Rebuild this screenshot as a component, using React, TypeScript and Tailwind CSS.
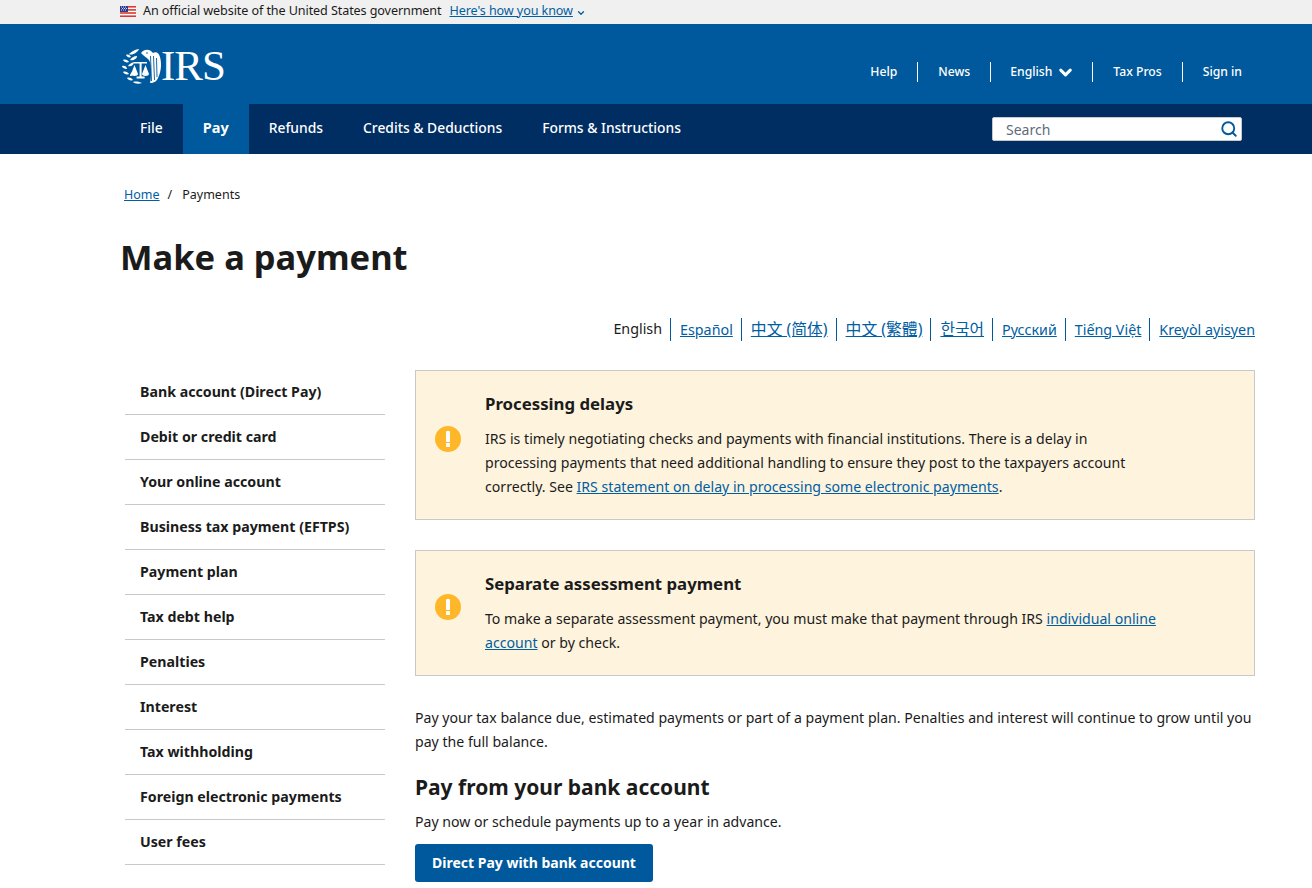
import { ChevronDown, Search } from 'lucide-react'

const sideLinks = [
  'Bank account (Direct Pay)',
  'Debit or credit card',
  'Your online account',
  'Business tax payment (EFTPS)',
  'Payment plan',
  'Tax debt help',
  'Penalties',
  'Interest',
  'Tax withholding',
  'Foreign electronic payments',
  'User fees',
]

const languages = [
  { label: 'Español', cjk: false },
  { label: '中文 (简体)', cjk: true },
  { label: '中文 (繁體)', cjk: true },
  { label: '한국어', cjk: true },
  { label: 'Русский', cjk: false },
  { label: 'Tiếng Việt', cjk: false },
  { label: 'Kreyòl ayisyen', cjk: false },
]

const navItems = ['File', 'Pay', 'Refunds', 'Credits & Deductions', 'Forms & Instructions']

function Flag() {
  return (
    <svg width="16" height="11" viewBox="0 0 16 11" className="shrink-0">
      <rect width="16" height="11" fill="#fff" />
      <rect y="0" width="16" height="1.6" fill="#d83933" />
      <rect y="3.1" width="16" height="1.6" fill="#d83933" />
      <rect y="6.2" width="16" height="1.6" fill="#d83933" />
      <rect y="9.4" width="16" height="1.6" fill="#d83933" />
      <rect width="8" height="6" fill="#2e3a8c" />
      <path d="M1 1h1M3 1h1M5 1h1M2 2.5h1M4 2.5h1M6 2.5h1M1 4h1M3 4h1M5 4h1" stroke="#fff" strokeWidth="0.8" />
    </svg>
  )
}

function Seal() {
  return (
    <svg width="40" height="35" viewBox="0 0 40 35" className="shrink-0" fill="#fff">
      {/* laurel */}
      <path d="M4 6c2-1 4 0 5 2-2 1-4 0-5-2zM1 11c2-1 5 0 6 2-2 1-5 0-6-2zM0 17c2-1 5 0 5 3-2 0-5-1-5-3zM1 23c2-1 5 0 6 2-2 1-5 0-6-2zM5 29c2-1 5 0 6 2-2 1-5 0-6-2z" />
      <path d="M7 5c2-2 7-5 10-5-1 3-7 7-10 5zM8 11c1-2 4-4 7-4 0 3-4 5-7 4zM6 17c1-2 3-3 6-4 0 3-3 5-6 4z" />
      <path d="M8 27c0-2 1-3 2-4 1 2 1 4-2 4zM11 33c3-1 7 0 9 1-3 1-7 1-9-1z" />
      {/* scales */}
      <path d="M12 13h13v1.400h-5.400v13h3v2.200h-8v-2.200h3v-13H12z" />
      <path d="M9 25l3.500-9 3.500 9c0 2.500-7 2.500-7 0zM20 25l3.500-9 3.500 9c0 2.500-7 2.500-7 0z" />
      {/* eagle */}
      <path d="M19 4c3-4 7-4 10-2l2 2c3-2 6 0 7 4 2 7 1 15-2 21-1 3-4 5-8 5 1-3 1-8 1-13 0-6-1-9-3-11-2-2-4-3-5-4z" />
      <path d="M28.500 7l1 25M31.500 7l1 24M34.500 9l.5 19" stroke="#00599c" strokeWidth="0.9" fill="none" />
      <circle cx="25" cy="4" r="0.8" fill="#00599c" />
    </svg>
  )
}

function Alert({ title, children }: { title: string; children: React.ReactNode }) {
  return (
    <div className="flex items-center border border-[#c9c9c9] bg-[#fef3dd] pb-[20px] pl-[19px] pr-[20px] pt-[21px]">
      <div className="relative mb-[14px] flex h-[26px] w-[26px] shrink-0 items-center justify-center rounded-full bg-[#ffb628]">
        <span className="absolute top-[5px] h-[11px] w-[4px] rounded-[1px] bg-white" />
        <span className="absolute bottom-[5px] h-[4px] w-[4px] bg-white" />
      </div>
      <div className="ml-[24px] max-w-[675px]">
        <h3 className="text-[16.800px] font-bold leading-[24px] text-[#1b1b1b]">{title}</h3>
        <p className="mt-[11px] text-[14.120px] leading-[24px] text-[#1b1b1b]">{children}</p>
      </div>
    </div>
  )
}

export default function App() {
  return (
    <div className="h-[888px] overflow-hidden bg-white font-['Noto_Sans','Noto_Sans_CJK_SC',sans-serif] text-[#1b1b1b]">
      {/* gov banner */}
      <div className="h-[24px] bg-[#f0f0f0] pb-[2px] pl-[120px]">
        <div className="flex h-full items-center text-[12.600px] tracking-[-0.1px]">
          <Flag />
          <span className="ml-[7px]">An official website of the United States government</span>
          <a className="ml-[8px] text-[#005ea2] underline">Here's how you know</a>
          <ChevronDown size={10} strokeWidth={3} className="ml-[3px] mt-[3px] text-[#005ea2]" />
        </div>
      </div>

      {/* header */}
      <div className="flex h-[80px] items-start justify-between bg-[#00599c] pl-[122px] pr-[70px]">
        <div className="mt-[24px] flex items-center">
          <Seal />
          <span className="-ml-[1px] font-['Liberation_Serif',serif] text-[43px] leading-[36px] tracking-[-1px] text-white">IRS</span>
        </div>
        <div className="mt-[38px] flex items-center text-[12.200px] font-medium text-white">
          <span className="pr-[20px] leading-[20px]">Help</span>
          <span className="border-l border-white px-[20px] leading-[20px]">News</span>
          <span className="flex h-[20px] items-center border-l border-white pl-[19px] pr-[17px] leading-[20px]">
            English
            <ChevronDown size={19} strokeWidth={3.800} className="ml-[4px]" />
          </span>
          <span className="border-l border-white px-[20px] leading-[20px]">Tax Pros</span>
          <span className="border-l border-white pl-[20px] leading-[20px]">Sign in</span>
        </div>
      </div>

      {/* main nav */}
      <div className="flex h-[50px] items-center justify-between bg-[#002d62] pl-[120px] pr-[70px]">
        <div className="flex h-full text-[13.850px] font-medium text-white">
          {navItems.map(item => (
            <a
              key={item}
              className={`flex h-full items-center px-[20px] pb-[2px] ${item === 'Pay' ? 'bg-[#00599c] text-[14.500px] font-bold' : ''}`}
            >
              {item}
            </a>
          ))}
        </div>
        <div className="flex h-[24px] w-[250px] items-center justify-between rounded-[2px] border border-[#c9c9c9] bg-white pl-[13px] pr-[3px]">
          <span className="text-[14px] text-[#5f6b7a]">Search</span>
          <Search size={18} strokeWidth={2.500} className="text-[#00599c]" />
        </div>
      </div>

      {/* page */}
      <div className="pl-[120px] pr-[57px]">
        <div className="flex pl-[4px] pt-[32px] text-[12.500px] leading-[18px]">
          <a className="text-[#005ea2] underline">Home</a>
          <span className="mx-[8px]">/</span>
          <span className="ml-[2px]">Payments</span>
        </div>
        <h1 className="mt-[30px] text-[34.500px] font-bold leading-[46px] text-[#1b1b1b]">Make a payment</h1>

        <div className="mt-[37px] flex h-[24px] items-center justify-end text-[14.300px] leading-[24px]">
          <span className="pr-[8px]">English</span>
          {languages.map(lang => (
            <a
              key={lang.label}
              className={`h-[23px] border-l border-[#00599c] pl-[9px] pr-[8px] leading-[23px] text-[#005ea2] underline last:pr-0 ${lang.cjk ? 'text-[15.800px]' : ''}`}
            >
              {lang.label}
            </a>
          ))}
        </div>

        <div className="mt-[29px] flex">
          <aside className="ml-[5px] w-[260px] shrink-0">
            {sideLinks.map(link => (
              <div
                key={link}
                className="flex h-[45px] items-center border-b border-[#c9c9c9] pb-[1px] pl-[15px] text-[14.200px] font-bold text-[#1b1b1b]"
              >
                {link}
              </div>
            ))}
          </aside>

          <main className="ml-[30px] flex-1">
            <Alert title="Processing delays">
              IRS is timely negotiating checks and payments with financial institutions. There is a delay in
              processing payments that need additional handling to ensure they post to the taxpayers account
              correctly. See{' '}
              <a className="text-[#005ea2] underline">IRS statement on delay in processing some electronic payments</a>.
            </Alert>
            <div className="mt-[30px]">
              <Alert title="Separate assessment payment">
                To make a separate assessment payment, you must make that payment through IRS{' '}
                <a className="text-[#005ea2] underline">individual online account</a> or by check.
              </Alert>
            </div>
            <p className="mt-[30px] text-[14.120px] leading-[24px]">
              Pay your tax balance due, estimated payments or part of a payment plan. Penalties and interest will
              continue to grow until you pay the full balance.
            </p>
            <h2 className="mt-[18px] text-[21px] font-bold leading-[30px]">Pay from your bank account</h2>
            <p className="mt-[10px] text-[14.120px] leading-[20px]">Pay now or schedule payments up to a year in advance.</p>
            <a className="mt-[12px] inline-flex h-[38px] items-center rounded-[3px] bg-[#00599c] px-[17px] pb-[2px] text-[14px] font-bold text-white">
              Direct Pay with bank account
            </a>
          </main>
        </div>
      </div>
    </div>
  )
}
